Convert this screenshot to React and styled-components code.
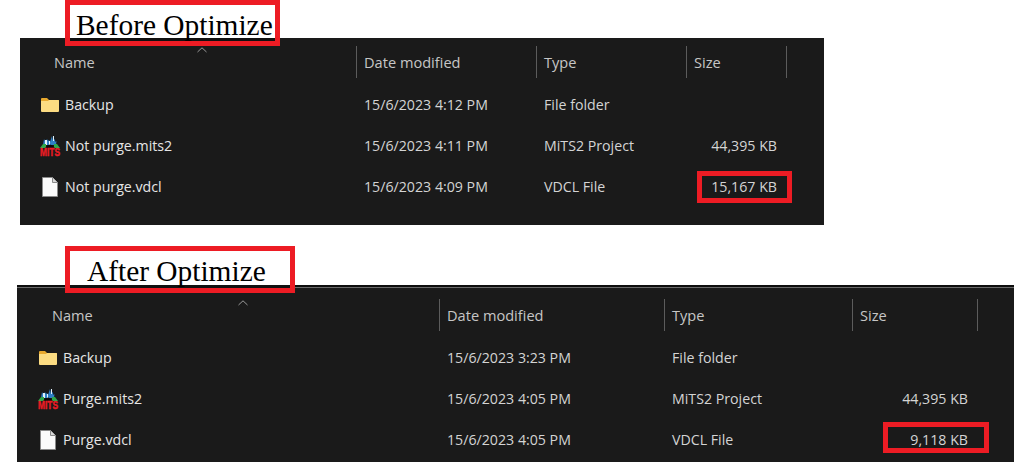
import React from "react";
import styled, { createGlobalStyle } from "styled-components";

const Global = createGlobalStyle`
  html, body { margin: 0; padding: 0; background: #fff; }
  #root { width: 1024px; height: 476px; overflow: hidden; }
`;

const Page = styled.div`
  display: flex;
  flex-direction: column;
  width: 1024px;
  height: 476px;
`;

const Section = styled.section`
  display: flex;
  flex-direction: column;
  margin-top: ${(p) => p.$top}px;
  margin-left: ${(p) => p.$left}px;
  width: ${(p) => p.$width}px;
`;

const Caption = styled.h2`
  position: relative;
  z-index: 2;
  box-sizing: border-box;
  margin: 0 0 ${(p) => p.$overlap}px ${(p) => p.$left}px;
  width: ${(p) => p.$width}px;
  height: ${(p) => p.$height}px;
  border: 5px solid #ed1c24;
  padding-left: ${(p) => p.$pad}px;
  font: 400 29.4px/40px "Liberation Serif", serif;
  color: #000;
  white-space: nowrap;
  overflow: hidden;
  background: linear-gradient(#fff 0 ${(p) => p.$white}px, #111 ${(p) => p.$white}px);
`;

const Panel = styled.div`
  box-sizing: border-box;
  background: #1a1a1a;
  height: ${(p) => p.$height}px;
  padding-top: ${(p) => p.$padTop}px;
  border-top: ${(p) => (p.$ruled ? "2px solid #0d0d0d" : "0")};
  box-shadow: ${(p) => (p.$ruled ? "inset 0 1px 0 #6a6a6a" : "none")};
`;

const Row = styled.div`
  display: grid;
  grid-template-columns: ${(p) => p.$cols};
  height: ${(p) => p.$height}px;
  align-items: center;
  font: 400 14.2px/20px "Open Sans", sans-serif;
  color: #d4d4d4;
`;

const HeaderRow = styled(Row)`
  font-size: 14.6px;
  color: #c6c6c6;
  align-items: stretch;
  margin-bottom: 6px;
`;

const HeaderCell = styled.div`
  position: relative;
  display: flex;
  align-items: center;
  padding-left: ${(p) => p.$indent}px;
  border-right: 1px solid #5c5c5c;
`;

const Caret = styled.svg`
  position: absolute;
  top: 1px;
  left: ${(p) => p.$left}px;
  width: 10px;
  height: 6px;
`;

const NameCell = styled.div`
  display: flex;
  align-items: center;
  gap: 5px;
  padding-left: ${(p) => p.$offset}px;
  color: #e6e6e6;
  white-space: nowrap;
`;

const IconBox = styled.span`
  display: flex;
  justify-content: center;
  align-items: center;
  width: 20px;
  height: 20px;
  flex: none;
`;

const Cell = styled.div`
  padding-left: 7px;
  white-space: nowrap;
`;

const SizeCell = styled.div`
  padding-right: 10px;
  text-align: right;
  white-space: nowrap;
`;

const Flagged = styled.span`
  position: relative;
  &::after {
    content: "";
    position: absolute;
    top: ${(p) => p.$top}px;
    bottom: ${(p) => p.$bottom}px;
    left: ${(p) => p.$l}px;
    right: ${(p) => p.$r}px;
    border: 5px solid #ed1c24;
  }
`;

const FolderIcon = () => (
  <svg width="18" height="14" viewBox="0 0 18 14">
    <path d="M0 1a1 1 0 0 1 1-1h5l2 2h10v2H0z" fill="#e8a92e" />
    <path d="M0 3h7l1-1h9a1 1 0 0 1 1 1v10a1 1 0 0 1-1 1H1a1 1 0 0 1-1-1z" fill="#fcdc82" />
  </svg>
);

const FileIcon = () => (
  <svg width="16" height="20" viewBox="0 0 16 20">
    <path d="M.5.5h10l5 5v14H.5z" fill="#fbfbfb" stroke="#8a8a8a" />
    <path d="M10.5.5v5h5" fill="#d8d8d8" stroke="#8a8a8a" />
  </svg>
);

const MitsIcon = () => (
  <svg width="20" height="20" viewBox="0 0 20 20" overflow="visible">
    <path d="M3 9l1-6 1.500 3 1.500-3 1 2 1-1 1 2 2-6 1 5 1.500-2 1 3 1-1-.5 4z" fill="#2f7fc4" />
    <path d="M5 4h2v5H5zM9 5h1v4H9zM13 0h1v5h-1z" fill="#dff0fa" />
    <path d="M0 12l3-4h3v4zM14 8h3l3 4h-6z" fill="#2ea84a" />
    <path d="M5 12q5-7 10 0z" fill="#0b0b0b" />
    <text x="0" y="20" fontFamily="Liberation Sans, sans-serif" fontWeight="700" fontSize="11" textLength="20" lengthAdjust="spacingAndGlyphs" stroke="#ed1c24" strokeWidth=".4" fill="#ed1c24">MITS</text>
  </svg>
);

const icons = { folder: <FolderIcon />, mits: <MitsIcon />, file: <FileIcon /> };

const Table = ({ cols, rows, nameIndent, caretLeft, rowOffset, flag }) => (
  <>
    <HeaderRow $cols={cols} $height={32}>
      <HeaderCell $indent={nameIndent}>
        Name
        <Caret $left={caretLeft} viewBox="0 0 10 6">
          <path d="M.5 5L5 .8 9.5 5" fill="none" stroke="#9a9a9a" />
        </Caret>
      </HeaderCell>
      <HeaderCell $indent={7}>Date modified</HeaderCell>
      <HeaderCell $indent={7}>Type</HeaderCell>
      <HeaderCell $indent={7}>Size</HeaderCell>
    </HeaderRow>
    {rows.map((r) => (
      <Row key={r.name} $cols={cols} $height={41}>
        <NameCell $offset={rowOffset}>
          <IconBox>{icons[r.icon]}</IconBox>
          {r.name}
        </NameCell>
        <Cell>{r.date}</Cell>
        <Cell>{r.type}</Cell>
        <SizeCell>
          {r.flag ? (
            <Flagged $l={flag.l} $r={flag.r} $top={flag.t} $bottom={flag.b}>
              {r.size}
            </Flagged>
          ) : (
            r.size
          )}
        </SizeCell>
      </Row>
    ))}
  </>
);

export default function App() {
  return (
    <Page>
      <Global />
      <Section $top={0} $left={20} $width={804}>
        <Caption $left={45} $width={215} $height={46} $overlap={-8} $pad={6} $white={33}>
          Before Optimize
        </Caption>
        <Panel $height={187} $padTop={8}>
          <Table
            cols="337px 180px 150px 100px"
            nameIndent={34}
            caretLeft={177}
            rowOffset={20}
            flag={{ l: -14, r: -15, t: -6, b: -7 }}
            rows={[
              { name: "Backup", icon: "folder", date: "15/6/2023 4:12 PM", type: "File folder", size: "" },
              { name: "Not purge.mits2", icon: "mits", date: "15/6/2023 4:11 PM", type: "MiTS2 Project", size: "44,395 KB" },
              { name: "Not purge.vdcl", icon: "file", date: "15/6/2023 4:09 PM", type: "VDCL File", size: "15,167 KB", flag: true },
            ]}
          />
        </Panel>
      </Section>
      <Section $top={21} $left={17} $width={997}>
        <Caption $left={48} $width={230} $height={47} $overlap={-8} $pad={17} $white={34}>
          After Optimize
        </Caption>
        <Panel $height={177} $padTop={12} $ruled>
          <Table
            cols="423px 225px 188px 125px"
            nameIndent={35}
            caretLeft={221}
            rowOffset={21}
            flag={{ l: -27, r: -21, t: -8, b: -4 }}
            rows={[
              { name: "Backup", icon: "folder", date: "15/6/2023 3:23 PM", type: "File folder", size: "" },
              { name: "Purge.mits2", icon: "mits", date: "15/6/2023 4:05 PM", type: "MiTS2 Project", size: "44,395 KB" },
              { name: "Purge.vdcl", icon: "file", date: "15/6/2023 4:05 PM", type: "VDCL File", size: "9,118 KB", flag: true },
            ]}
          />
        </Panel>
      </Section>
    </Page>
  );
}
